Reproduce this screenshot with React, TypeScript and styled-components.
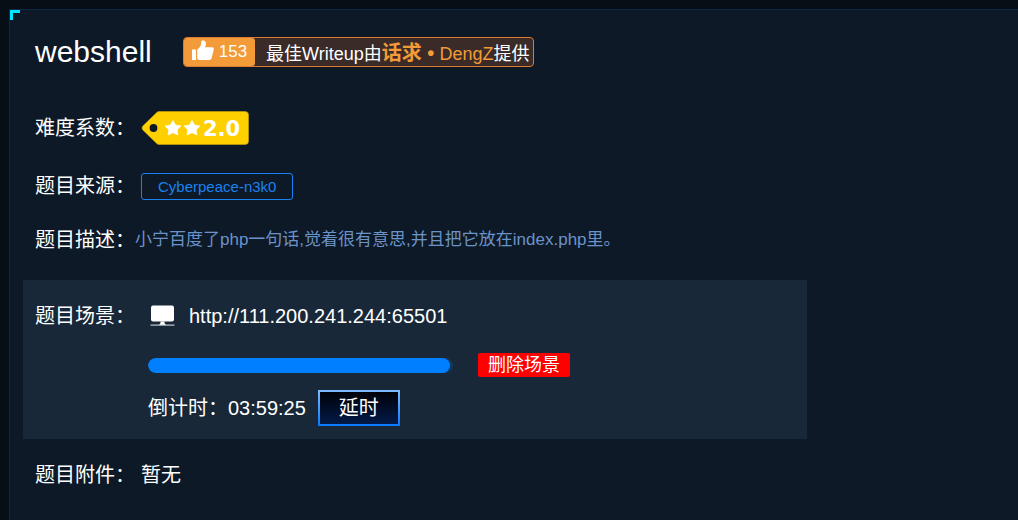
import React from "react";
import styled, { createGlobalStyle } from "styled-components";

const GlobalStyle = createGlobalStyle`
  *, *::before { box-sizing: border-box; }
  html, body, #root { height: 100%; }
  body {
    margin: 0;
    background: #070e15;
    color: #fff;
    font-family: "Liberation Sans", "Noto Sans CJK SC", sans-serif;
    font-size: 20px;
    line-height: 28px;
  }
`;

const Page = styled.div`
  min-height: 100%;
  padding: 9px 0 0 9px;
  display: flex;
`;

const Panel = styled.main`
  position: relative;
  flex: 1;
  min-width: 0;
  padding: 22px 13px 16px;
  background: #0d1926;
  border: 1px solid #0b2b4e;
  border-width: 1px 0 0 1px;

  &::before {
    content: "";
    position: absolute;
    top: 0;
    left: 0;
    width: 10px;
    height: 10px;
    border: 3px solid #00e4ff;
    border-width: 3px 0 0 3px;
  }
`;

const Header = styled.header`
  display: flex;
  align-items: center;
  gap: 31px;
  margin-bottom: 12px;
  padding: 0 12px;
  height: 40px;
`;

const Title = styled.h1`
  margin: 0;
  font-size: 30px;
  line-height: 36px;
  font-weight: 400;
`;

const Writeup = styled.div`
  display: flex;
  height: 30px;
  padding-right: 4px;
  border: 1px solid #e07a2c;
  border-radius: 4px;
  background: #3a2b29;
  font-size: 18px;
  line-height: 30px;
  white-space: nowrap;
`;

const LikeButton = styled.button`
  display: flex;
  align-items: center;
  gap: 5px;
  height: 28px;
  margin-right: 11px;
  padding: 0 8px;
  border: 0;
  border-radius: 3px;
  background: #f29b38;
  color: #fff;
  font: inherit;
  font-size: 17px;
  line-height: 28px;
`;

const Author = styled.a`
  color: #f29b38;
  text-decoration: none;

  strong {
    font-size: 20px;
  }
`;

const Row = styled.section<{ $height: number }>`
  display: flex;
  align-items: center;
  min-height: ${(p) => p.$height}px;
  padding: 0 12px;
`;

const Label = styled.h2`
  margin: 0;
  width: 106px;
  flex: none;
  font-size: 20px;
  line-height: 28px;
  font-weight: 400;
  white-space: nowrap;
`;

const Description = styled.p`
  margin: 0 0 0 -6px;
  color: #6b93c9;
  font-size: 17px;
`;

const Source = styled.a`
  height: 27px;
  padding: 0 16px;
  border: 1px solid #1a82f0;
  border-radius: 3px;
  color: #1a82f0;
  font-size: 15px;
  line-height: 26px;
  text-decoration: none;
`;

const Rating = styled.svg`
  display: block;
  width: 108px;
  height: 34px;
`;

const Scene = styled.section`
  max-width: 784px;
  margin: 0 0 10px;
  padding: 22px 0 13px;
  background: #182838;
`;

const SceneHead = styled.div`
  display: flex;
  align-items: center;
  height: 28px;
  padding: 0 12px;
`;

const SceneLink = styled.a`
  display: flex;
  align-items: center;
  gap: 14px;
  margin-left: 9px;
  color: #fff;
  text-decoration: none;
`;

const SceneBody = styled.div`
  padding: 0 12px 0 125px;
`;

const ProgressRow = styled.div`
  display: flex;
  align-items: center;
  gap: 25px;
  height: 24px;
  margin: 23px 0 13px;
`;

const Track = styled.div`
  flex: 0 1 305px;
  height: 15px;
  border-radius: 8px;
  background: #0e3860;
  overflow: hidden;
`;

const Fill = styled.div`
  height: 100%;
  border-radius: 8px;
  background: #0080ff;
`;

const DeleteButton = styled.button`
  height: 24px;
  padding: 0 10px;
  border: 0;
  border-radius: 2px;
  background: #f00;
  color: #fff;
  font: inherit;
  font-size: 18px;
  line-height: 24px;
`;

const TimerRow = styled.div`
  display: flex;
  align-items: center;
  gap: 12px;
`;

const ExtendButton = styled.button`
  width: 82px;
  height: 36px;
  padding: 0;
  border: 2px solid transparent;
  background:
    linear-gradient(#000208, #031a48) padding-box,
    linear-gradient(#80baff, #0878ff) border-box;
  color: #fff;
  font: inherit;
  line-height: 32px;
`;

const SCENE_URL = "http://111.200.241.244:65501";
const remaining = 3 * 3600 + 59 * 60 + 25;
const total = 4 * 3600;
const percent = Math.round((remaining / total) * 99);

const Thumb = () => (
  <svg width="22" height="24" viewBox="0 0 22 24" fill="#fff" aria-hidden="true">
    <rect x="0" y="9.5" width="4" height="10.5" rx="0.5" />
    <path d="M5.2 9.6C8.3 7.6 9.1 5.4 9.2 2.6C9.3 .7 10.5 .1 11.7 .4C14 1 14.4 3.6 13.4 6.2L13 7.2H20C21.5 7.2 22.1 8.4 21.7 10L19.6 18C19.2 19.4 18.2 20 17 20H8.3C7 20 6.3 19.4 5.2 18.9Z" />
  </svg>
);

const STAR =
  "M0 -7.6L2.6 -2.9L8 -2.1L4.2 1.9L5 7L0 4.8L-5 7L-4.2 1.9L-8 -2.1L-2.6 -2.9Z";

const Difficulty = () => (
  <Rating viewBox="0 0 108 34" role="img" aria-label="2.0">
    <path
      d="M18 .5H104Q107.5 .5 107.5 4V30Q107.5 33.5 104 33.5H18Q16.8 33.5 15.8 32.6L1.8 19Q0 17 1.8 15L15.8 1.4Q16.8 .5 18 .5Z"
      fill="#ffd000"
      stroke="#c9a40c"
      strokeWidth="0.6"
    />
    <circle cx="12.5" cy="17" r="3.9" fill="#0d1926" />
    <g fill="#fff" stroke="#fff" strokeWidth="0.6" strokeLinejoin="round">
      <path d={STAR} transform="translate(32 17)" />
      <path d={STAR} transform="translate(51 17)" />
    </g>
    <text x="62" y="25" fill="#fff" fontFamily="DejaVu Sans, sans-serif" fontWeight="700" fontSize="21">
      2.0
    </text>
  </Rating>
);

const Monitor = () => (
  <svg width="25" height="22" viewBox="0 0 25 22" aria-hidden="true">
    <rect x="1" y="0.5" width="23" height="16" rx="2" fill="#fff" />
    <path d="M10.5 16.5H14.5V18L16 20H9L10.5 18Z" fill="#fff" />
    <path d="M0.5 19.5H24.5V20.7H0.5Z" fill="#c3cbd3" />
  </svg>
);

export default function App() {
  return (
    <>
      <GlobalStyle />
      <Page>
        <Panel>
          <Header>
            <Title>webshell</Title>
            <Writeup>
              <LikeButton type="button" aria-label="153">
                <Thumb />
                153
              </LikeButton>
              <span>
                最佳Writeup由
                <Author href="#writeup">
                  <strong>话求 •</strong> DengZ
                </Author>
                提供
              </span>
            </Writeup>
          </Header>
          <Row $height={88}>
            <Label>难度系数：</Label>
            <Difficulty />
          </Row>
          <Row $height={28}>
            <Label>题目来源：</Label>
            <Source href="#source">Cyberpeace-n3k0</Source>
          </Row>
          <Row $height={80}>
            <Label>题目描述：</Label>
            <Description>
              小宁百度了php一句话,觉着很有意思,并且把它放在index.php里。
            </Description>
          </Row>
          <Scene>
            <SceneHead>
              <Label>题目场景：</Label>
              <SceneLink href={SCENE_URL}>
                <Monitor />
                {SCENE_URL}
              </SceneLink>
            </SceneHead>
            <SceneBody>
              <ProgressRow>
                <Track role="progressbar" aria-valuenow={percent} aria-label="倒计时">
                  <Fill style={{ width: `${percent}%` }} />
                </Track>
                <DeleteButton type="button">删除场景</DeleteButton>
              </ProgressRow>
              <TimerRow>
                <span>倒计时：03:59:25</span>
                <ExtendButton type="button">延时</ExtendButton>
              </TimerRow>
            </SceneBody>
          </Scene>
          <Row $height={52}>
            <Label>题目附件：</Label>
            <span>暂无</span>
          </Row>
        </Panel>
      </Page>
    </>
  );
}
